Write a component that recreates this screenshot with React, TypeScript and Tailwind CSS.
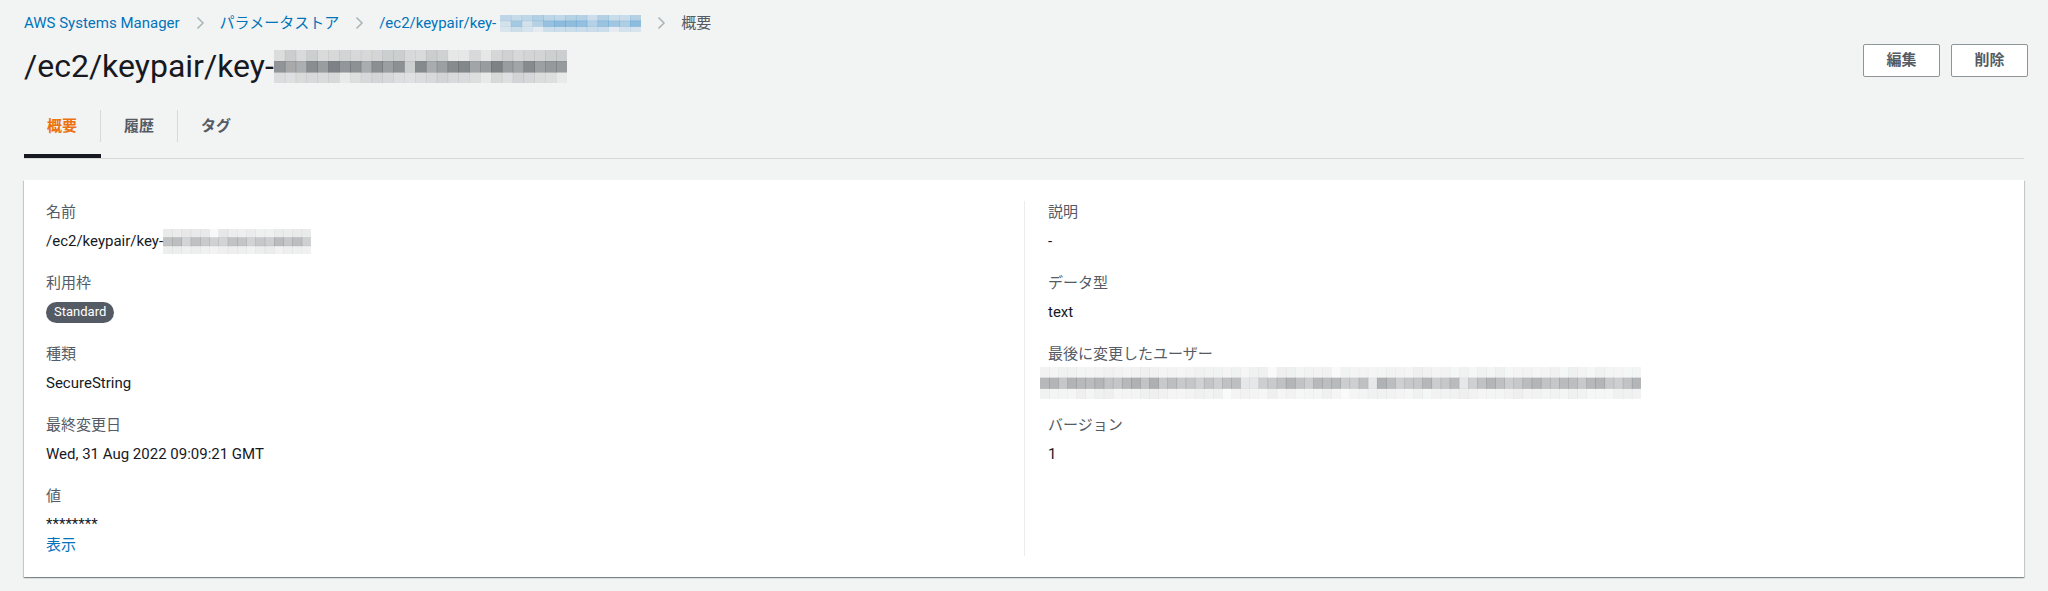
import React from "react";

const FONT = "font-['Roboto','Noto_Sans_CJK_JP',sans-serif]";

// deterministic noise so the redacted blocks look the same every render
function rng(seed: number) {
  let s = seed;
  return () => {
    s = (s * 1103515245 + 12345) % 2147483648;
    return s / 2147483648;
  };
}

type MosaicProps = {
  w: number;
  h: number;
  cols: number;
  rows: number[];
  seed: number;
  color: string;
  className?: string;
};

function Mosaic({ w, h, cols, rows, seed, color, className }: MosaicProps) {
  const next = rng(seed);
  const cw = w / cols;
  const rh = h / rows.length;
  const cells: React.ReactNode[] = [];
  rows.forEach((strength, r) => {
    for (let c = 0; c < cols; c++) {
      const v = next();
      const o = v < 0.06 ? strength * 0.3 : strength * (0.55 + 0.45 * v);
      cells.push(
        <rect
          key={`${r}-${c}`}
          x={c * cw}
          y={r * rh}
          width={cw + 0.5}
          height={rh + 0.5}
          fill={color}
          fillOpacity={o}
        />
      );
    }
  });
  return (
    <svg width={w} height={h} className={className}>
      {cells}
    </svg>
  );
}

function Chevron() {
  return (
    <svg width="16" height="16" viewBox="0 0 16 16" className="mx-[12px] shrink-0">
      <path d="M5.5 2.5 11 8l-5.5 5.5" fill="none" stroke="#aab7b8" strokeWidth="1.6" />
    </svg>
  );
}

function Field({
  label,
  children,
  tight,
}: {
  label: string;
  children: React.ReactNode;
  tight?: boolean;
}) {
  return (
    <div className="flex flex-col">
      <div className="text-[15px] leading-[22px] text-[#545b64]">{label}</div>
      <div className={`mt-[7px] flex items-center text-[15px] text-[#16191f] ${tight ? "" : "h-[22px] leading-[22px]"}`}>
        {children}
      </div>
    </div>
  );
}

function Tab({ label, active, sep }: { label: string; active?: boolean; sep?: boolean }) {
  return (
    <div className="flex h-[48px] flex-col">
      <div
        className={`flex h-[32px] items-center px-[23px] text-[15px] font-bold ${
          active ? "text-[#ec7211]" : "text-[#545b64]"
        } ${sep ? "border-r border-[#d5dbdb]" : ""}`}
      >
        {label}
      </div>
      {active && <div className="mt-auto h-[4px] bg-[#16191f]" />}
    </div>
  );
}

export default function App() {
  return (
    <div className={`min-h-screen bg-[#f2f3f3] px-[24px] pt-[12px] ${FONT}`}>
      <nav className="flex h-[22px] items-center text-[15px] leading-[22px]">
        <a className="text-[#0073bb]">AWS Systems Manager</a>
        <Chevron />
        <a className="text-[#0073bb]">パラメータストア</a>
        <Chevron />
        <a className="flex items-center text-[#0073bb]">
          /ec2/keypair/key-
          <Mosaic w={141} h={17} cols={13} rows={[0.3, 0.5, 0.2]} seed={7} color="#1f7fc4" className="ml-[4px]" />
        </a>
        <Chevron />
        <span className="text-[#545b64]">概要</span>
      </nav>

      <div className="mt-[10px] flex items-start justify-between">
        <h1 className="mt-[2px] flex items-center text-[32px] font-normal leading-[40px] text-[#16191f]">
          /ec2/keypair/key-
          <Mosaic w={293} h={33} cols={27} rows={[0.22, 0.7, 0.18]} seed={41} color="#444a4f" />
        </h1>
        <div className="-mr-[4px] flex gap-[11px]">
          <button
            type="button"
            className="h-[33px] w-[77px] rounded-[2px] border border-[#8d9599] bg-white text-[15px] font-bold text-[#545b64]"
          >
            編集
          </button>
          <button
            type="button"
            className="h-[33px] w-[77px] rounded-[2px] border border-[#8d9599] bg-white text-[15px] font-bold text-[#545b64]"
          >
            削除
          </button>
        </div>
      </div>

      <div className="mt-[24px] flex border-b border-[#d5dbdb]">
        <Tab label="概要" active sep />
        <Tab label="履歴" sep />
        <Tab label="タグ" />
      </div>

      <div className="mt-[21px] grid grid-cols-2 bg-white px-[22px] py-[21px] shadow-[0_1px_1px_0_rgba(0,28,36,0.3),1px_1px_1px_0_rgba(0,28,36,0.15),-1px_1px_1px_0_rgba(0,28,36,0.15)]">
        <div className="flex flex-col gap-[20px]">
          <Field label="名前">
            /ec2/keypair/key-
            <Mosaic w={148} h={25} cols={16} rows={[0.15, 0.45, 0.12]} seed={19} color="#5a5f63" className="shrink-0" />
          </Field>
          <Field label="利用枠">
            <span className="inline-flex h-[21px] items-center rounded-full bg-[#545b64] px-[8px] text-[13px] text-white">
              Standard
            </span>
          </Field>
          <Field label="種類">SecureString</Field>
          <Field label="最終変更日">Wed, 31 Aug 2022 09:09:21 GMT</Field>
          <Field label="値" tight>
            <div className="flex flex-col">
              <span className="leading-[20px]">********</span>
              <a className="leading-[22px] text-[#0073bb]">表示</a>
            </div>
          </Field>
        </div>
        <div className="flex flex-col gap-[20px] border-l border-[#eaeded] pl-[23px]">
          <Field label="説明">-</Field>
          <Field label="データ型">text</Field>
          <Field label="最後に変更したユーザー">
            <Mosaic w={601} h={32} cols={66} rows={[0.1, 0.5, 0.1]} seed={3} color="#5a5f63" className="-ml-[8px] shrink-0" />
          </Field>
          <Field label="バージョン">1</Field>
        </div>
      </div>
    </div>
  );
}
